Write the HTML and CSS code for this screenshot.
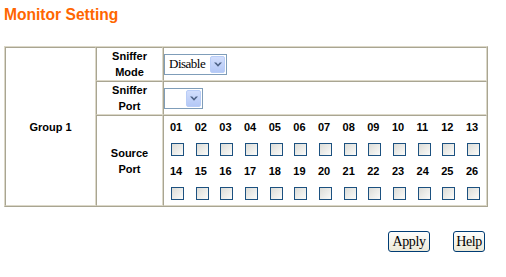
FILE: index.html
```html
<!DOCTYPE html>
<html>
<head>
	<title>Monitor Setting</title>
	<link rel="stylesheet" href="styles.css">
</head>
<body>
	<div id="page">
		<div class="title">Monitor Setting</div>
		<table class="setting">
			<tr class="row-mode">
				<td rowspan="3" class="group">Group 1</td>
				<td class="label">Sniffer<br>Mode</td>
				<td class="value">
					<div class="select sel-mode"><span class="sel-text">Disable</span><span class="sel-arrow"><svg width="8" height="5" viewBox="0 0 8 5"><path d="M0 0.5h2.2l1.8 2 1.8-2h2.2L4 4.8z" fill="#4d6185"/></svg></span></div>
				</td>
			</tr>
			<tr class="row-port">
				<td class="label">Sniffer<br>Port</td>
				<td class="value">
					<div class="select sel-port"><span class="sel-text"></span><span class="sel-arrow"><svg width="8" height="5" viewBox="0 0 8 5"><path d="M0 0.5h2.2l1.8 2 1.8-2h2.2L4 4.8z" fill="#4d6185"/></svg></span></div>
				</td>
			</tr>
			<tr class="row-source">
				<td class="label">Source<br>Port</td>
				<td class="value ports">
					<div class="port-grid">
						<span>01</span><span>02</span><span>03</span><span>04</span><span>05</span><span>06</span><span>07</span><span>08</span><span>09</span><span>10</span><span>11</span><span>12</span><span>13</span>
						<input type="checkbox"><input type="checkbox"><input type="checkbox"><input type="checkbox"><input type="checkbox"><input type="checkbox"><input type="checkbox"><input type="checkbox"><input type="checkbox"><input type="checkbox"><input type="checkbox"><input type="checkbox"><input type="checkbox">
						<span>14</span><span>15</span><span>16</span><span>17</span><span>18</span><span>19</span><span>20</span><span>21</span><span>22</span><span>23</span><span>24</span><span>25</span><span>26</span>
						<input type="checkbox"><input type="checkbox"><input type="checkbox"><input type="checkbox"><input type="checkbox"><input type="checkbox"><input type="checkbox"><input type="checkbox"><input type="checkbox"><input type="checkbox"><input type="checkbox"><input type="checkbox"><input type="checkbox">
					</div>
				</td>
			</tr>
		</table>
		<div class="actions">
			<button class="btn btn-apply">Apply</button>
			<button class="btn btn-help">Help</button>
		</div>
	</div>
</body>
</html>
```

FILE: styles.css
```css
body {
	margin:0;
	background:#fff;
	font-family:"Liberation Sans", Arial, sans-serif;
	color:#000;
}
#page {
	width:484px;
	padding:6px 0 0 4px;
}
.title {
	color:#ff6600;
	font-size:15.6px;
	font-weight:bold;
	line-height:17px;
	margin-bottom:23px;
}

/* table with old-school two tone borders */
.setting {
	width:484px;
	border-spacing:0;
	border:1px solid;
	border-color:#dcd8c8 #a9a592 #a9a592 #dcd8c8;
}
.setting td {
	border:1px solid;
	border-color:#a9a592 #dcd8c8 #dcd8c8 #a9a592;
	padding:0;
}
.group {
	width:89px;
	text-align:center;
	font-size:11px;
	font-weight:bold;
}
.label {
	width:65px;
	text-align:center;
	font-size:11px;
	font-weight:bold;
	line-height:16px;
}
.row-mode td, .row-port td {
	height:31px;
}
.value {
	padding-left:1px;
}
.ports {
	vertical-align:top;
}

/* fake xp selects */
.select {
	display:flex;
	align-items:center;
	box-sizing:border-box;
	height:21px;
	border:1px solid #7f9db9;
	background:#fff;
	padding:1px;
}
.sel-mode {
	width:63px;
}
.sel-port {
	width:39px;
}
.sel-text {
	flex:1;
	padding-left:3px;
	font-family:"Liberation Serif", serif;
	font-size:13px;
	letter-spacing:-0.5px;
}
.sel-arrow {
	display:flex;
	align-items:center;
	justify-content:center;
	box-sizing:border-box;
	width:15px;
	height:17px;
	border:1px solid #b9cdf7;
	border-radius:2px;
	background:linear-gradient(#d2defc, #b4c8f6);
}

.port-grid {
	display:grid;
	grid-template-columns:repeat(13, 13px);
	column-gap:11.67px;
	row-gap:9px;
	padding:5px 0 5px 6px;
	font-size:11px;
	font-weight:bold;
	line-height:13px;
}
.port-grid input {
	appearance:none;
	margin:0 0 0 1px;
	width:13px;
	height:13px;
	border:1px solid #1c5180;
	background:linear-gradient(135deg, #dcdcd7, #fbfbf9);
}

.actions {
	display:flex;
	justify-content:flex-end;
	gap:23px;
	margin-top:24px;
	padding-right:3px;
}
.btn {
	height:21px;
	padding:0;
	border:1px solid #003c74;
	border-radius:3px;
	background:linear-gradient(#fefefd, #ece9d8);
	font-family:"Liberation Serif", serif;
	font-size:14px;
	letter-spacing:-0.4px;
	color:#000;
}
.btn-apply {
	width:42px;
}
.btn-help {
	width:32px;
}
```
